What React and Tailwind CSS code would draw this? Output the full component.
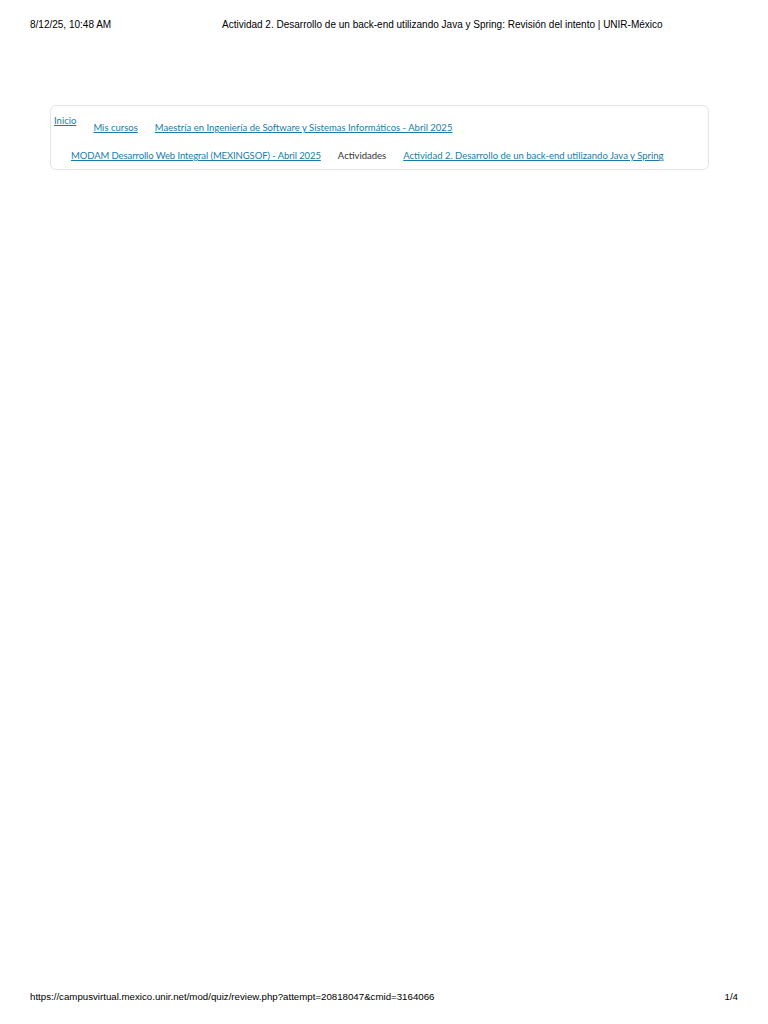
import React from "react";

const row1 = [
  { label: "Mis cursos", href: "#" },
  { label: "Maestría en Ingeniería de Software y Sistemas Informáticos - Abril 2025", href: "#" },
];

const row2 = [
  { label: "MODAM Desarrollo Web Integral (MEXINGSOF) - Abril 2025", href: "#", cls: "tracking-[-0.1px]" },
  { label: "Actividades" },
  { label: "Actividad 2. Desarrollo de un back-end utilizando Java y Spring", href: "#" },
];

function Crumb({ item }) {
  if (!item.href) {
    return <span className="text-[#333333]">{item.label}</span>;
  }
  return (
    <a href={item.href} className={"text-[#1b7aa8] underline underline-offset-[1px] " + (item.cls || "")}>
      {item.label}
    </a>
  );
}

export default function App() {
  return (
    <div className="w-[768px] h-[1024px] bg-white flex flex-col font-['Liberation_Sans',Arial,sans-serif] text-black">
      {/* print header */}
      <div className="flex px-[30px] pt-[19px] text-[10px] leading-[12px]">
        <span className="w-[192px] shrink-0">8/12/25, 10:48 AM</span>
        <span>Actividad 2. Desarrollo de un back-end utilizando Java y Spring: Revisión del intento | UNIR-México</span>
      </div>

      {/* breadcrumb */}
      <div className="ml-[50px] mt-[74px] w-[659px] border border-[#e3e5e8] rounded-[6px] px-[3px] pt-[9px] pb-[8px] font-['Lato','Noto_Sans',sans-serif] text-[9.5px] leading-[11px]">
        <div className="flex items-start">
          <Crumb item={{ label: "Inicio", href: "#" }} />
          {row1.map((item) => (
            <div key={item.label} className="ml-[17px] mt-[7px]">
              <Crumb item={item} />
            </div>
          ))}
        </div>
        <div className="flex items-start mt-[17px]">
          {row2.map((item) => (
            <div key={item.label} className="ml-[17px]">
              <Crumb item={item} />
            </div>
          ))}
        </div>
      </div>

      <div className="flex-1" />

      {/* print footer */}
      <div className="flex justify-between px-[30px] pb-[21px] text-[9.7px] leading-[12px]">
        <span>https://campusvirtual.mexico.unir.net/mod/quiz/review.php?attempt=20818047&amp;cmid=3164066</span>
        <span>1/4</span>
      </div>
    </div>
  );
}
